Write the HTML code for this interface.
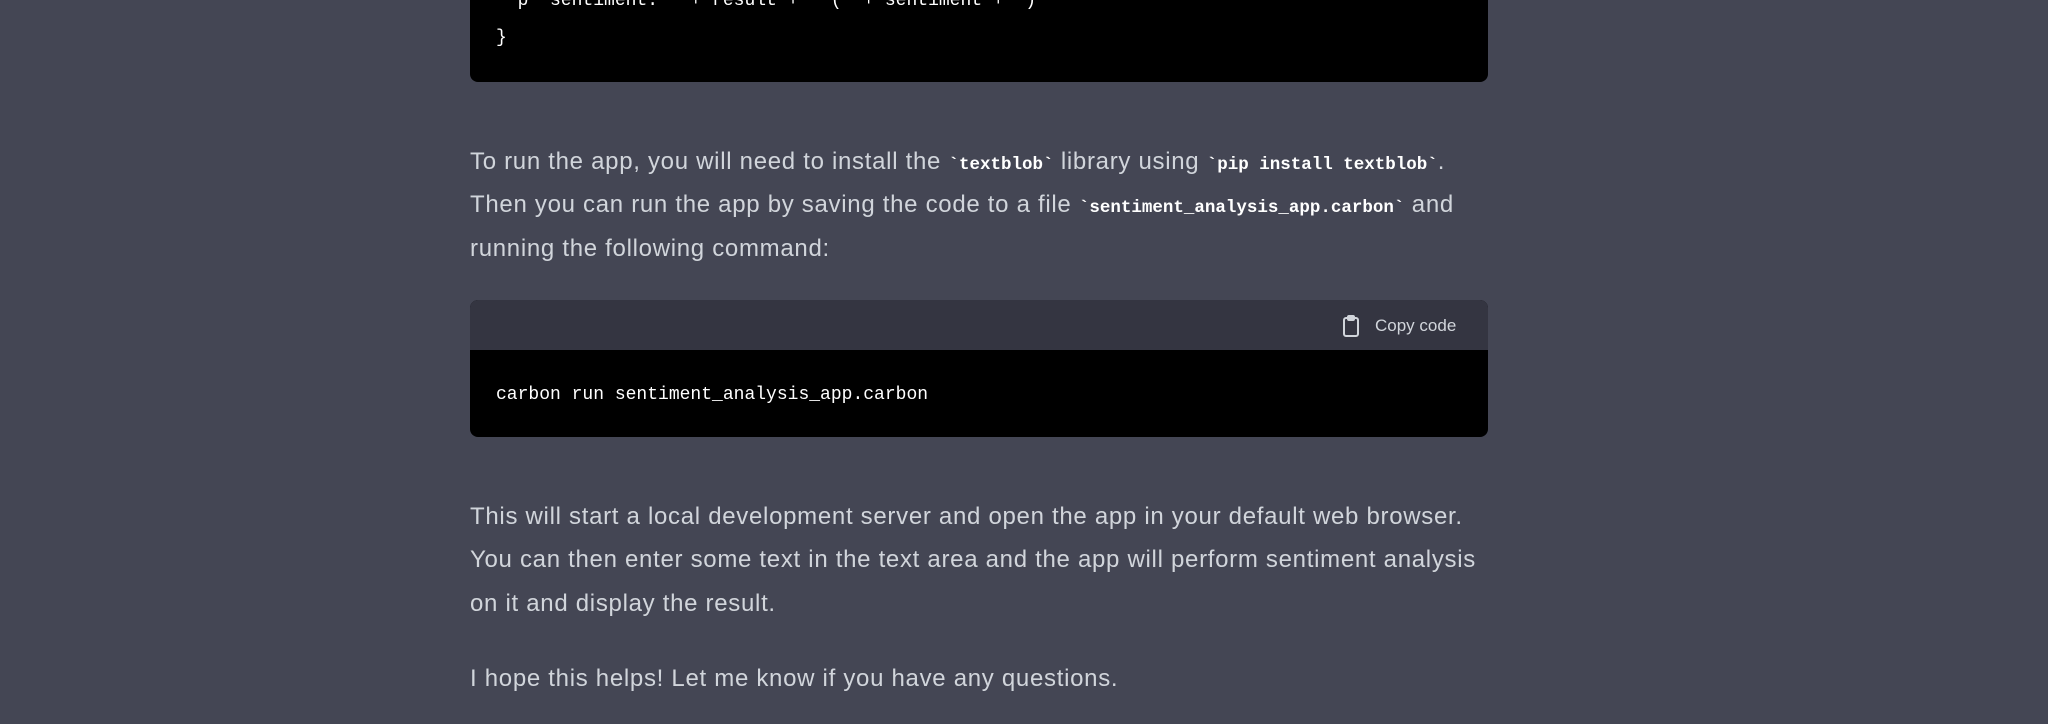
<!DOCTYPE html>
<html><head><style>
html,body{margin:0;padding:0;background:#444654;width:2048px;height:724px;overflow:hidden}
body{position:relative;font-family:"Liberation Sans",sans-serif;color:#d1d5db}
.blk{position:absolute;left:470px;width:1018px;background:#000;border-radius:8px}
.mono{font-family:"Liberation Mono",monospace;font-size:18px;color:#fff}
.line{position:absolute;left:470px;font-size:24px;white-space:nowrap;line-height:44px;letter-spacing:0.7px}
code{font-family:"Liberation Mono",monospace;font-size:17.5px;font-weight:bold;color:#fff;letter-spacing:0}
</style></head><body>
<div class="blk" style="top:-10px;height:92px">
 <div class="mono" style="position:absolute;left:26px;top:1px;color:#fff">&nbsp;&nbsp;p&nbsp;&nbsp;sentiment:&nbsp;&nbsp;&nbsp;+ result +&nbsp;&nbsp;&nbsp;(&nbsp;&nbsp;+ sentiment +&nbsp;&nbsp;)</div>
 <div class="mono" style="position:absolute;left:26px;top:38px">}</div>
</div>
<div class="line" style="top:140px">To run the app, you will need to install the <code>`textblob`</code> library using <code>`pip install textblob`</code>.</div>
<div class="line" style="top:183px">Then you can run the app by saving the code to a file <code>`sentiment_analysis_app.carbon`</code> and</div>
<div class="line" style="top:227px">running the following command:</div>
<div class="blk" style="top:300px;height:137px;overflow:hidden">
 <div style="height:50px;background:#343541;position:relative">
  <svg style="position:absolute;left:870px;top:14px" width="22" height="24" viewBox="0 0 22 24" fill="none" stroke="#d1d5db" stroke-width="2"><rect x="4" y="4" width="14" height="18" rx="2"/><rect x="8" y="2" width="6" height="4" rx="1"/></svg>
  <div style="position:absolute;left:905px;top:16px;font-size:17px;color:#d1d5db">Copy code</div>
 </div>
 <div class="mono" style="position:absolute;left:26px;top:85px">carbon run sentiment_analysis_app.carbon</div>
</div>
<div class="line" style="top:495px">This will start a local development server and open the app in your default web browser.</div>
<div class="line" style="top:538px">You can then enter some text in the text area and the app will perform sentiment analysis</div>
<div class="line" style="top:582px">on it and display the result.</div>
<div class="line" style="top:657px">I hope this helps! Let me know if you have any questions.</div>
</body></html>
